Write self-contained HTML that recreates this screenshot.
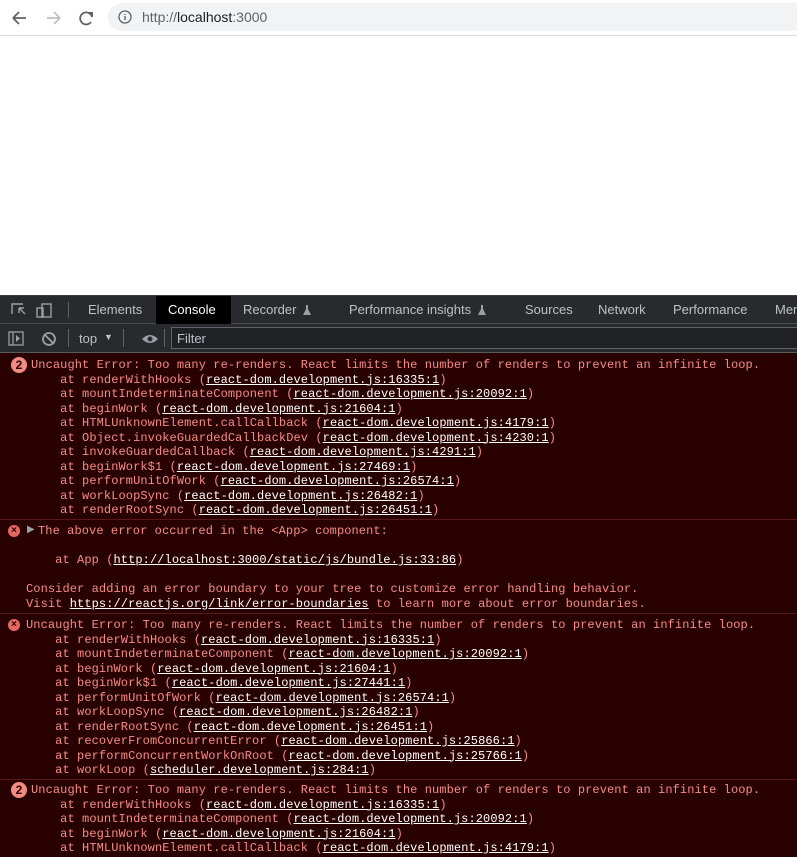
<!DOCTYPE html>
<html><head><style>
*{margin:0;padding:0;box-sizing:border-box}
body{width:797px;height:857px;overflow:hidden;background:#fff;font-family:"Liberation Sans",sans-serif;position:relative}
.abs{position:absolute}
.top{left:0;top:0;width:797px;height:36px;background:#fff;border-bottom:1px solid #dadce0}
.url{left:108px;top:3px;width:700px;height:28px;background:#f1f3f4;border-radius:14px}
.tabs{left:0;top:295px;width:797px;height:29px;background:#292a2d;border-top:1px solid #3c3c3c;border-bottom:1px solid #4a4c50}
.tab{position:absolute;top:6px;font-size:13px;color:#bdc1c6}
.filt{left:0;top:324px;width:797px;height:29px;background:#292a2d;border-bottom:1px solid #5a5a5a}
.con{left:0;top:353px;width:797px;height:504px;background:#290000}
.g{position:absolute;left:0;width:797px;font-family:"Liberation Mono",monospace;font-size:12px;letter-spacing:0.09px;line-height:14.5px;color:#f78c86;white-space:pre}
.g u{color:#fff;text-decoration:underline}
.sep{position:absolute;left:0;width:797px;height:1px;background:#5c1616}
.b2{position:absolute;width:16px;height:16px;border-radius:8px;background:#f28b82;color:#290000;font:bold 12px "Liberation Sans",sans-serif;text-align:center;line-height:16px}
.bx{position:absolute;width:12px;height:12px;border-radius:6px;background:#e46962;color:#290000;font:bold 10px "Liberation Sans",sans-serif;text-align:center;line-height:12px}
</style></head><body>
<div class="abs top"></div>
<svg class="abs" style="left:10px;top:8px" width="100" height="20" viewBox="0 0 100 20">
<path d="M3 10h13M3 10l6-6M3 10l6 6" stroke="#5f6368" stroke-width="1.8" fill="none"/>
<path d="M37 10h13M50 10l-6-6M50 10l-6 6" stroke="#bdc1c6" stroke-width="1.8" fill="none"/>
<path d="M82 9a6 6 0 1 0 -1 5" stroke="#5f6368" stroke-width="1.8" fill="none"/><path d="M78 4h5v5z" fill="#5f6368"/>
</svg>
<div class="abs url"></div>
<svg class="abs" style="left:118px;top:10px" width="16" height="16"><circle cx="7" cy="7" r="6" stroke="#5f6368" stroke-width="1.3" fill="none"/><path d="M7 6v4M7 4v1" stroke="#5f6368" stroke-width="1.4"/></svg>
<div class="abs" style="left:142px;top:9px;font-size:14px;color:#5f6368">http://<span style="color:#202124">localhost</span>:3000</div>

<div class="abs tabs">
<svg style="position:absolute;left:10px;top:5px" width="50" height="18"><path d="M2 13V3h11M9 7l6 6M9 7h5M9 7v5" stroke="#9aa0a6" stroke-width="1.4" fill="none"/><rect x="32" y="3" width="9" height="13" stroke="#9aa0a6" stroke-width="1.4" fill="none"/><rect x="27" y="7" width="6" height="9" stroke="#9aa0a6" stroke-width="1.4" fill="none"/></svg>
<div style="position:absolute;left:68px;top:6px;width:1px;height:16px;background:#5f6368"></div>
<span class="tab" style="left:88px">Elements</span>
<div style="position:absolute;left:156px;top:0;width:75px;height:28px;background:#000"></div>
<span class="tab" style="left:168px;color:#fff">Console</span>
<span class="tab" style="left:243px">Recorder</span>
<svg style="position:absolute;left:302px;top:8px" width="10" height="12"><path d="M3 1h4M4 1v4L1 11h8L6 5V1" fill="#9aa0a6"/></svg>
<span class="tab" style="left:349px">Performance insights</span>
<svg style="position:absolute;left:477px;top:8px" width="10" height="12"><path d="M3 1h4M4 1v4L1 11h8L6 5V1" fill="#9aa0a6"/></svg>
<span class="tab" style="left:525px">Sources</span>
<span class="tab" style="left:598px">Network</span>
<span class="tab" style="left:673px">Performance</span>
<span class="tab" style="left:775px">Mem</span>
</div>
<div class="abs filt">
<svg style="position:absolute;left:8px;top:6px" width="160" height="18"><rect x="1" y="2" width="14" height="13" stroke="#9aa0a6" stroke-width="1.3" fill="none"/><path d="M5 2v13" stroke="#9aa0a6" stroke-width="1.3"/><path d="M8 5l4 3.5-4 3.5z" fill="#9aa0a6"/><circle cx="41" cy="9" r="6" stroke="#9aa0a6" stroke-width="1.8" fill="none"/><path d="M37 5l8 8" stroke="#9aa0a6" stroke-width="1.8"/><path d="M134 9q8-8 16 0q-8 8-16 0z" fill="#9aa0a6"/><circle cx="142" cy="9" r="2.5" fill="#292a2d"/></svg>
<div style="position:absolute;left:68px;top:5px;width:1px;height:18px;background:#5f6368"></div>
<span class="tab" style="left:79px;top:7px">top</span>
<span class="tab" style="left:104px;top:8px;font-size:9px">▼</span>
<div style="position:absolute;left:123px;top:5px;width:1px;height:18px;background:#5f6368"></div>
<div style="position:absolute;left:164px;top:5px;width:1px;height:18px;background:#5f6368"></div>
<div style="position:absolute;left:171px;top:3px;width:640px;height:22px;border:1px solid #5f6368;background:#202124"></div>
<span class="tab" style="left:177px;top:7px;color:#bdc1c6">Filter</span>
</div>

<div class="abs con"></div>
<div class="b2" style="left:11px;top:357px">2</div>
<div class="g" style="top:358px;left:31px">Uncaught Error: Too many re-renders. React limits the number of renders to prevent an infinite loop.
    at renderWithHooks (<u>react-dom.development.js:16335:1</u>)
    at mountIndeterminateComponent (<u>react-dom.development.js:20092:1</u>)
    at beginWork (<u>react-dom.development.js:21604:1</u>)
    at HTMLUnknownElement.callCallback (<u>react-dom.development.js:4179:1</u>)
    at Object.invokeGuardedCallbackDev (<u>react-dom.development.js:4230:1</u>)
    at invokeGuardedCallback (<u>react-dom.development.js:4291:1</u>)
    at beginWork$1 (<u>react-dom.development.js:27469:1</u>)
    at performUnitOfWork (<u>react-dom.development.js:26574:1</u>)
    at workLoopSync (<u>react-dom.development.js:26482:1</u>)
    at renderRootSync (<u>react-dom.development.js:26451:1</u>)</div>
<div class="sep" style="top:519px"></div>
<div class="bx" style="left:8px;top:525px">×</div>
<div class="g" style="top:524px;left:27px;color:#9aa0a6;font-size:10px">▶</div>
<div class="g" style="top:524px;left:38px">The above error occurred in the &lt;App&gt; component:</div>
<div class="g" style="top:553px;left:26px">    at App (<u>http://localhost:3000/static/js/bundle.js:33:86</u>)

Consider adding an error boundary to your tree to customize error handling behavior.
Visit <u>https://reactjs.org/link/error-boundaries</u> to learn more about error boundaries.</div>
<div class="sep" style="top:613px"></div>
<div class="bx" style="left:8px;top:619px">×</div>
<div class="g" style="top:618px;left:26px">Uncaught Error: Too many re-renders. React limits the number of renders to prevent an infinite loop.
    at renderWithHooks (<u>react-dom.development.js:16335:1</u>)
    at mountIndeterminateComponent (<u>react-dom.development.js:20092:1</u>)
    at beginWork (<u>react-dom.development.js:21604:1</u>)
    at beginWork$1 (<u>react-dom.development.js:27441:1</u>)
    at performUnitOfWork (<u>react-dom.development.js:26574:1</u>)
    at workLoopSync (<u>react-dom.development.js:26482:1</u>)
    at renderRootSync (<u>react-dom.development.js:26451:1</u>)
    at recoverFromConcurrentError (<u>react-dom.development.js:25866:1</u>)
    at performConcurrentWorkOnRoot (<u>react-dom.development.js:25766:1</u>)
    at workLoop (<u>scheduler.development.js:284:1</u>)</div>
<div class="sep" style="top:779px"></div>
<div class="b2" style="left:11px;top:782px">2</div>
<div class="g" style="top:783px;left:31px">Uncaught Error: Too many re-renders. React limits the number of renders to prevent an infinite loop.
    at renderWithHooks (<u>react-dom.development.js:16335:1</u>)
    at mountIndeterminateComponent (<u>react-dom.development.js:20092:1</u>)
    at beginWork (<u>react-dom.development.js:21604:1</u>)
    at HTMLUnknownElement.callCallback (<u>react-dom.development.js:4179:1</u>)</div>
</body></html>
